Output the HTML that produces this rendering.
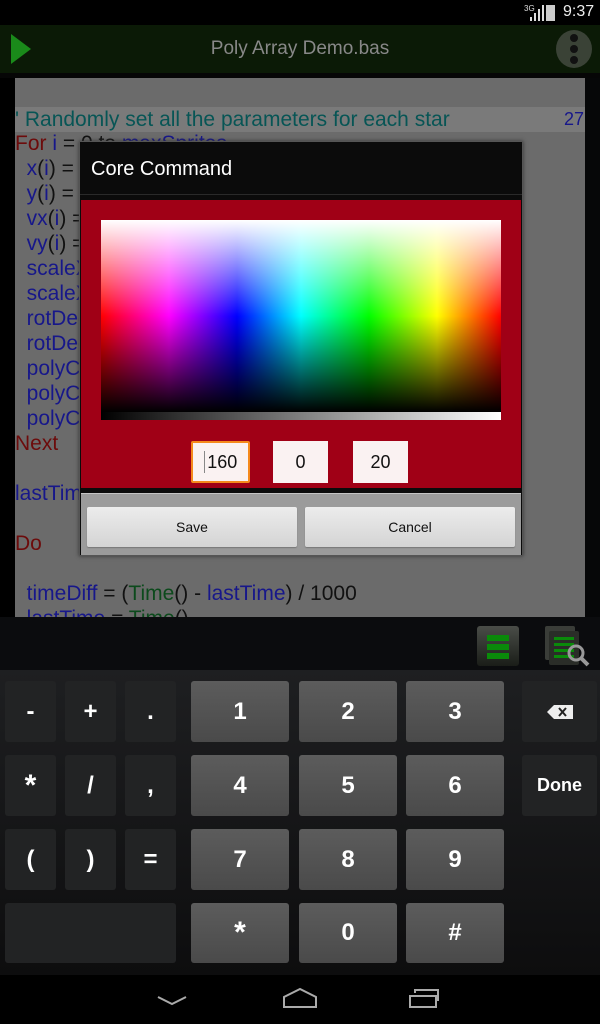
<!DOCTYPE html>
<html><head><meta charset="utf-8"><style>
*{margin:0;padding:0;box-sizing:border-box}
body{width:600px;height:1024px;background:#000;position:relative;overflow:hidden;font-family:"Liberation Sans",sans-serif}
.abs{position:absolute}
.code{left:15px;top:78px;width:570px;height:539px;background:#6b6b6b;overflow:hidden}
.ln{position:absolute;left:0;font-size:21px;white-space:pre;line-height:25px}
.b{color:#17178a}.r{color:#6c0b0b}.g{color:#0c4a1c}.k{color:#111}.t{color:#075555}
.key{position:absolute;border-radius:3px;color:#fff;font-weight:bold;font-size:24px;display:flex;align-items:center;justify-content:center}
.s{background:#222324}.n{background:linear-gradient(#5c5c5c,#4a4a4a)}
.inp{position:absolute;top:441px;height:42px;background:#faf2f2;font-size:18px;color:#111;display:flex;align-items:center;justify-content:center}
.btn{position:absolute;top:507px;height:40px;background:linear-gradient(#ececec,#d4d4d4);border-radius:2px;font-size:14px;color:#111;display:flex;align-items:center;justify-content:center;box-shadow:0 1px 1px #777}
</style></head><body>
<div class="abs" style="left:0;top:0;width:600px;height:25px;background:#000"></div>
<div class="abs" style="left:524px;top:4px;font-size:8px;color:#ddd">3G</div>
<svg class="abs" style="left:530px;top:5px" width="14" height="16"><rect x="0" y="12" width="2" height="4" fill="#ddd"/><rect x="4" y="8" width="2" height="8" fill="#ddd"/><rect x="8" y="4" width="2" height="12" fill="#ddd"/><rect x="12" y="0" width="2" height="16" fill="#ddd"/></svg>
<div class="abs" style="left:546px;top:5px;width:9px;height:16px;background:#ccc"></div>
<div class="abs" style="left:563px;top:3px;font-size:16px;color:#eee">9:37</div>
<div class="abs" style="left:0;top:25px;width:600px;height:48px;background:#0b1a06"></div>
<svg class="abs" style="left:10px;top:33px" width="22" height="32"><polygon points="1,1 21,16 1,31" fill="#1a8a1a"/></svg>
<div class="abs" style="left:0;top:38px;width:600px;text-align:center;font-size:19px;color:#888">Poly Array Demo.bas</div>
<div class="abs" style="left:556px;top:30px;width:36px;height:38px;border-radius:50%;background:#3a4236"></div>
<div class="abs" style="left:570px;top:34px;width:8px;height:8px;border-radius:50%;background:#111"></div>
<div class="abs" style="left:570px;top:45px;width:8px;height:8px;border-radius:50%;background:#111"></div>
<div class="abs" style="left:570px;top:56px;width:8px;height:8px;border-radius:50%;background:#111"></div>
<div class="abs" style="left:0;top:73px;width:600px;height:5px;background:#060606"></div>
<div class="abs code">
<div class="abs" style="left:0;top:29px;width:570px;height:25px;background:#7a7a7a"></div>
<div class="ln t" style="top:29px">' Randomly set all the parameters for each star</div>
<div class="ln" style="top:29px;left:549px;color:#17178a;font-size:18px">27</div>
<div class="ln" style="top:53px"><span class="r">For</span> <span class="b">i</span><span class="k"> = 0 to </span><span class="b">maxSprites</span></div>
<div class="ln" style="top:78px"><span class="b">  x</span><span class="k">(</span><span class="b">i</span><span class="k">) = Rnd(maxX)</span></div>
<div class="ln" style="top:103px"><span class="b">  y</span><span class="k">(</span><span class="b">i</span><span class="k">) = Rnd(maxY)</span></div>
<div class="ln" style="top:128px"><span class="b">  vx</span><span class="k">(</span><span class="b">i</span><span class="k">) =</span></div>
<div class="ln" style="top:153px"><span class="b">  vy</span><span class="k">(</span><span class="b">i</span><span class="k">) =</span></div>
<div class="ln b" style="top:178px">  scaleX</div>
<div class="ln b" style="top:203px">  scaleX</div>
<div class="ln b" style="top:228px">  rotDeg</div>
<div class="ln b" style="top:253px">  rotDeg</div>
<div class="ln b" style="top:278px">  polyC</div>
<div class="ln b" style="top:303px">  polyC</div>
<div class="ln b" style="top:328px">  polyC</div>
<div class="ln r" style="top:353px">Next</div>
<div class="ln" style="top:403px"><span class="b">lastTime</span><span class="k"> = Time()</span></div>
<div class="ln r" style="top:453px">Do</div>
<div class="ln" style="top:503px"><span class="b">  timeDiff</span><span class="k"> = (</span><span class="g">Time</span><span class="k">() - </span><span class="b">lastTime</span><span class="k">) / 1000</span></div>
<div class="ln" style="top:528px"><span class="b">  lastTime</span><span class="k"> = </span><span class="g">Time</span><span class="k">()</span></div>
</div>
<div class="abs" style="left:585px;top:78px;width:15px;height:539px;background:#060708"></div>
<div class="abs" style="left:79px;top:141px;width:444px;height:415px;background:#0b0b0b;box-shadow:0 0 4px #333;border:1px solid #555"></div>
<div class="abs" style="left:91px;top:158px;font-size:20px;color:#fff">Core Command</div>
<div class="abs" style="left:80px;top:194px;width:442px;height:1px;background:#2a2a2a"></div>
<div class="abs" style="left:81px;top:200px;width:440px;height:288px;background:#a00016"></div>
<div class="abs" style="left:101px;top:220px;width:400px;height:192px;background:linear-gradient(90deg,#f00 0%,#f0f 17%,#00f 34%,#0ff 50%,#0f0 67%,#ff0 84%,#f00 100%)"></div>
<div class="abs" style="left:101px;top:220px;width:400px;height:192px;background:linear-gradient(#fff 0%,rgba(255,255,255,0) 50%,rgba(0,0,0,0) 50%,#000 100%)"></div>
<div class="abs" style="left:101px;top:412px;width:400px;height:8px;background:linear-gradient(90deg,#000,#fff)"></div>
<div class="inp" style="left:191px;width:59px;border:2px solid #f58a1c;border-radius:2px">&#8201;160</div>
<div class="abs" style="left:204px;top:451px;width:1px;height:22px;background:#888"></div>
<div class="inp" style="left:273px;width:55px">0</div>
<div class="inp" style="left:353px;width:55px">20</div>
<div class="abs" style="left:81px;top:488px;width:440px;height:5px;background:#0b0b0b"></div>
<div class="abs" style="left:81px;top:493px;width:440px;height:62px;background:#9b9b9b;border-top:1px solid #c4c4c4"></div>
<div class="btn" style="left:87px;width:210px">Save</div>
<div class="btn" style="left:305px;width:210px">Cancel</div>
<div class="abs" style="left:0;top:617px;width:600px;height:53px;background:#0b0c0e"></div>
<div class="abs" style="left:477px;top:626px;width:42px;height:40px;background:linear-gradient(#4a4d48,#1a1d18);border-radius:3px"></div>
<div class="abs" style="left:487px;top:635px;width:22px;height:6px;background:#0a8a0a"></div>
<div class="abs" style="left:487px;top:644px;width:22px;height:6px;background:#0a8a0a"></div>
<div class="abs" style="left:487px;top:653px;width:22px;height:6px;background:#0a8a0a"></div>
<div class="abs" style="left:545px;top:626px;width:30px;height:34px;background:#3a3d38;border-radius:2px"></div>
<div class="abs" style="left:549px;top:631px;width:30px;height:34px;background:#2a2d28;border-radius:2px"></div>
<div class="abs" style="left:554px;top:637px;width:20px;height:3px;background:#0a8a0a;box-shadow:0 6px #0a8a0a,0 12px #0a8a0a,0 18px #0a8a0a"></div>
<svg class="abs" style="left:565px;top:642px" width="28" height="28"><circle cx="11" cy="11" r="7" fill="none" stroke="#999" stroke-width="3"/><line x1="16" y1="16" x2="23" y2="23" stroke="#999" stroke-width="4"/></svg>
<div class="abs" style="left:0;top:670px;width:600px;height:305px;background:linear-gradient(#1e1f21,#0d0d0e)"></div>
<div class="key s" style="left:5px;top:681px;width:51px;height:61px">-</div>
<div class="key s" style="left:65px;top:681px;width:51px;height:61px">+</div>
<div class="key s" style="left:125px;top:681px;width:51px;height:61px">.</div>
<div class="key s" style="left:5px;top:755px;width:51px;height:61px;font-size:30px">*</div>
<div class="key s" style="left:65px;top:755px;width:51px;height:61px">/</div>
<div class="key s" style="left:125px;top:755px;width:51px;height:61px">,</div>
<div class="key s" style="left:5px;top:829px;width:51px;height:61px">(</div>
<div class="key s" style="left:65px;top:829px;width:51px;height:61px">)</div>
<div class="key s" style="left:125px;top:829px;width:51px;height:61px">=</div>
<div class="key s" style="left:5px;top:903px;width:171px;height:60px"></div>
<div class="key n" style="left:191px;top:681px;width:98px;height:61px">1</div>
<div class="key n" style="left:299px;top:681px;width:98px;height:61px">2</div>
<div class="key n" style="left:406px;top:681px;width:98px;height:61px">3</div>
<div class="key n" style="left:191px;top:755px;width:98px;height:61px">4</div>
<div class="key n" style="left:299px;top:755px;width:98px;height:61px">5</div>
<div class="key n" style="left:406px;top:755px;width:98px;height:61px">6</div>
<div class="key n" style="left:191px;top:829px;width:98px;height:61px">7</div>
<div class="key n" style="left:299px;top:829px;width:98px;height:61px">8</div>
<div class="key n" style="left:406px;top:829px;width:98px;height:61px">9</div>
<div class="key n" style="left:191px;top:903px;width:98px;height:60px;font-size:30px">*</div>
<div class="key n" style="left:299px;top:903px;width:98px;height:60px">0</div>
<div class="key n" style="left:406px;top:903px;width:98px;height:60px">#</div>
<div class="key s" style="left:522px;top:681px;width:75px;height:61px"><svg width="26" height="14"><polygon points="0,7 7,0 26,0 26,14 7,14" fill="#eee"/><path d="M12 3l7 8M19 3l-7 8" stroke="#222" stroke-width="2"/></svg></div>
<div class="key s" style="left:522px;top:755px;width:75px;height:61px;font-size:18px">Done</div>
<svg class="abs" style="left:150px;top:985px" width="300" height="30"><path d="M8 12l14 7l14-7" fill="none" stroke="#aaa" stroke-width="2"/><path d="M134 22v-10l16-8l16 8v10z" fill="none" stroke="#aaa" stroke-width="2"/><rect x="260" y="11" width="26" height="11" fill="none" stroke="#aaa" stroke-width="2"/><path d="M265 8v-3h23v11" fill="none" stroke="#aaa" stroke-width="2"/></svg>
</body></html>
